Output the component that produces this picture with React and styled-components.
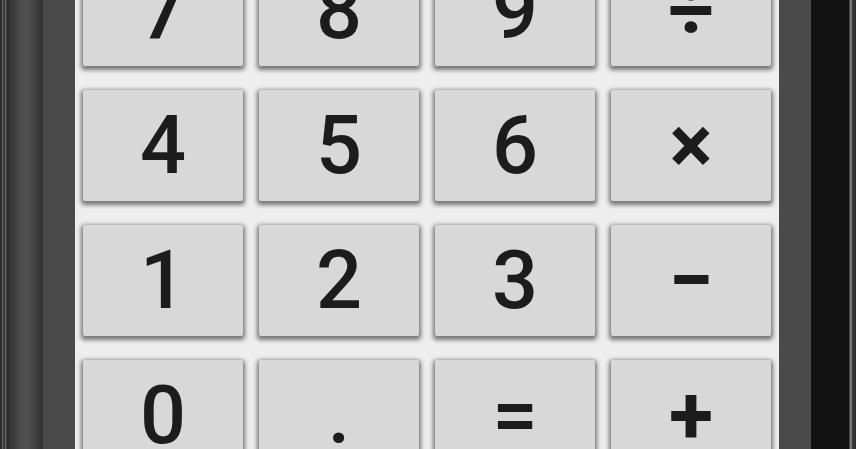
import React from 'react'
import styled, { createGlobalStyle } from 'styled-components'

const GlobalStyle = createGlobalStyle`
    html, body {
        margin: 0;
        padding: 0;
        background: #111;
        overflow: hidden;
    }
    body {
        font-family: Roboto, 'Liberation Sans', sans-serif;
    }
`

const Device = styled.div`
    display: flex;
    width: 856px;
    height: 449px;
    overflow: hidden;
`

// left rim of the phone body, a rounded metal edge
const BezelLeft = styled.div`
    flex: 0 0 43px;
    background: linear-gradient(90deg,
        #2e2e2e 0px, #2e2e2e 2px,
        #6a6a6a 2px, #6a6a6a 3px,
        #3c3c3c 3px, #3c3c3c 5px,
        #5e5e5e 5px, #5e5e5e 6px,
        #2c2c2c 7px,
        #3a3a3a 12px,
        #4e4e4e 22px,
        #505050 27px,
        #3c3c3c 38px,
        #303030 43px);
`

const BezelRight = styled.div`
    flex: 0 0 45px;
    background: linear-gradient(90deg,
        #121212 0px, #121212 38px,
        #4a4a4a 38px, #4a4a4a 39px,
        #7a7a7a 39px, #7a7a7a 41px,
        #3a3a3a 41px, #2a2a2a 45px);
`

const Frame = styled.div`
    flex: 0 0 32px;
    background: #4a4a4a;
`

const Screen = styled.div`
    flex: 0 0 704px;
    background: #eeeeee;
    padding: 0 8px;
    box-sizing: border-box;
`

const Keypad = styled.div`
    display: grid;
    grid-template-columns: repeat(4, 160px);
    grid-auto-rows: 111px;
    column-gap: 16px;
    row-gap: 24px;
    margin-top: -45px;
`

const Key = styled.button`
    display: flex;
    align-items: center;
    justify-content: center;
    border: none;
    border-radius: 2px;
    padding: 0;
    background: #d7d8d7;
    color: #1c1c1c;
    font-family: Roboto, 'Liberation Sans', sans-serif;
    font-size: 81px;
    font-weight: ${p => (p.$op ? 700 : 500)};
    line-height: 1;
    box-shadow: 0 2px 4px 2px rgba(0, 0, 0, 0.5);
    cursor: pointer;
`

const keys = [
    ['7'], ['8'], ['9'], ['÷', true],
    ['4'], ['5'], ['6'], ['×', true],
    ['1'], ['2'], ['3'], ['−', true],
    ['0'], ['.'], ['='], ['+', true],
]

const App = () => {
    return (
        <>
            <GlobalStyle />
            <Device>
                <BezelLeft />
                <Frame />
                <Screen>
                    <Keypad>
                        {keys.map(([label, op]) => (
                            <Key key={label} $op={op}>{label}</Key>
                        ))}
                    </Keypad>
                </Screen>
                <Frame />
                <BezelRight />
            </Device>
        </>
    )
}

export default App
